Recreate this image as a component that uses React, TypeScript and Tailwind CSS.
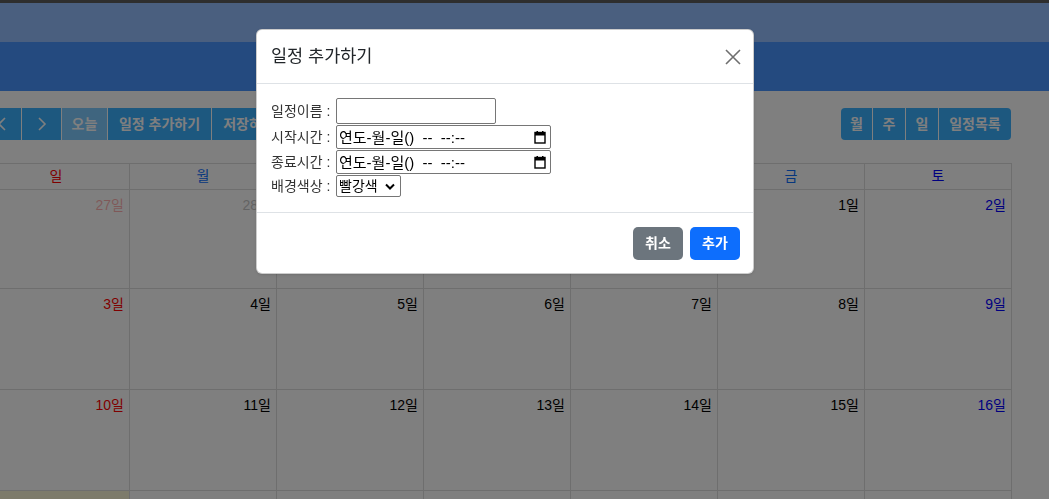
import React from 'react';

const FONT = { fontFamily: '"Liberation Sans", "Noto Sans CJK KR", sans-serif' };

const DAY_NAMES = ['일', '월', '화', '수', '목', '금', '토'];

// 2023년 9월 — 첫 주는 8월 27일부터
const WEEKS = [
  [27, 28, 29, 30, 31, 1, 2],
  [3, 4, 5, 6, 7, 8, 9],
  [10, 11, 12, 13, 14, 15, 16],
  [17, 18, 19, 20, 21, 22, 23],
  [24, 25, 26, 27, 28, 29, 30],
];

const headColor = (i: number) =>
  i === 0 ? 'text-[#ff0000]' : i === 6 ? 'text-[#0000ff]' : 'text-[#0d6efd]';

const dayColor = (i: number) =>
  i === 0 ? 'text-[#ff0000]' : i === 6 ? 'text-[#0000ff]' : 'text-black';

const ChevronLeft = () => (
  <svg width="10" height="16" viewBox="0 0 10 16" fill="none">
    <path d="M8 2L2 8l6 6" stroke="white" strokeWidth="1.6" />
  </svg>
);

const ChevronRight = () => (
  <svg width="10" height="16" viewBox="0 0 10 16" fill="none">
    <path d="M2 2l6 6-6 6" stroke="white" strokeWidth="1.6" />
  </svg>
);

const CalendarIcon = () => (
  <svg width="12" height="13" viewBox="0 0 12 13" fill="none">
    <rect x="1" y="1.5" width="10" height="10.5" stroke="black" strokeWidth="1.4" />
    <rect x="1" y="1.5" width="10" height="3" fill="black" />
    <rect x="2.5" y="0" width="1.5" height="2" fill="black" />
    <rect x="8" y="0" width="1.5" height="2" fill="black" />
  </svg>
);

function DateTimeField() {
  return (
    <div className="flex items-center justify-between w-[215px] h-[24px] border border-[#767676] rounded-[2px] pl-[2px] pr-[4px] bg-white">
      <span className="text-[15px] text-black whitespace-pre leading-none">연도-월-일()  --  --:--</span>
      <CalendarIcon />
    </div>
  );
}

export default function App() {
  return (
    <div className="relative w-full h-screen overflow-hidden bg-white" style={FONT}>
      {/* 상단 바 */}
      <div className="h-[3px] bg-[#5c5c5c]" />
      <div className="h-[39px] bg-[#94befe]" />
      <div className="h-[49px] bg-[#4894fe]" />

      {/* 캘린더 */}
      <div className="-ml-[18px] w-[1030px] pt-[17px]">
        <div className="flex items-center justify-between h-[32px] mb-[23px]">
          <div className="flex gap-px h-full">
            <button className="w-[39px] flex items-center justify-center bg-[#3bb0fe] rounded-l-[4px]">
              <ChevronLeft />
            </button>
            <button className="w-[39px] flex items-center justify-center bg-[#3bb0fe]">
              <ChevronRight />
            </button>
            <button className="w-[45px] bg-[#3bb0fe] opacity-65 text-white text-[14px] font-bold">오늘</button>
            <button className="w-[103px] bg-[#3bb0fe] text-white text-[14px] font-bold">일정 추가하기</button>
            <button className="w-[74px] bg-[#3bb0fe] text-white text-[14px] font-bold rounded-r-[4px]">저장하기</button>
          </div>
          <h2 className="text-[22px] text-black">2023년 9월</h2>
          <div className="flex gap-px h-full mr-px">
            <button className="w-[31px] bg-[#3bb0fe] text-white text-[14px] font-bold rounded-l-[4px]">월</button>
            <button className="w-[32px] bg-[#3bb0fe] text-white text-[14px] font-bold">주</button>
            <button className="w-[32px] bg-[#3bb0fe] text-white text-[14px] font-bold">일</button>
            <button className="w-[72px] bg-[#3bb0fe] text-white text-[14px] font-bold rounded-r-[4px]">일정목록</button>
          </div>
        </div>

        <div className="border-l border-t border-[#dddddd]">
          <div className="grid grid-cols-7">
            {DAY_NAMES.map((d, i) => (
              <div
                key={d}
                className={`h-[26px] flex items-center justify-center border-r border-b border-[#dddddd] text-[14px] ${headColor(i)}`}
              >
                {d}
              </div>
            ))}
          </div>
          {WEEKS.map((week, wi) => (
            <div key={wi} className="grid grid-cols-7">
              {week.map((day, di) => {
                const other = wi === 0 && di < 5;
                const today = wi === 3 && di === 0;
                return (
                  <div
                    key={di}
                    className={`${wi === 0 ? 'h-[99px]' : 'h-[101px]'} border-r border-b border-[#dddddd] flex justify-end items-start px-[5px] pt-[5px] ${
                      today ? 'bg-[#faf6d6]' : ''
                    }`}
                  >
                    <span
                      className={`text-[14px] leading-[20px] ${other && di > 0 ? 'text-[#444]' : dayColor(di)} ${
                        other ? 'opacity-30' : ''
                      }`}
                    >
                      {day}일
                    </span>
                  </div>
                );
              })}
            </div>
          ))}
        </div>
      </div>

      {/* 모달 배경 */}
      <div className="fixed inset-0 bg-black/50" />

      {/* 일정 추가 모달 */}
      <div className="absolute left-[256px] top-[29px] w-[498px] bg-white border border-black/20 rounded-[6px] shadow-sm">
        <div className="flex items-center justify-between h-[54px] border-b border-[#dee2e6] pl-[14px] pr-[12px]">
          <h5 className="text-[17.5px] text-[#212529]">일정 추가하기</h5>
          <button className="w-[16px] h-[16px] flex items-center justify-center">
            <svg width="16" height="16" viewBox="0 0 16 16" fill="none">
              <path d="M1 1l14 14M15 1L1 15" stroke="#6f6f6f" strokeWidth="1.6" />
            </svg>
          </button>
        </div>

        <div className="px-[14px] pt-[14px] pb-[15px] text-[14px] text-[#333]">
          <div className="flex items-center mb-px">
            <span className="w-[65px] shrink-0 whitespace-nowrap">일정이름 :</span>
            <input type="text" className="w-[160px] h-[26px] border border-[#767676] rounded-[2px] px-1 outline-none" />
          </div>
          <div className="flex items-center mb-px">
            <span className="w-[65px] shrink-0 whitespace-nowrap">시작시간 :</span>
            <DateTimeField />
          </div>
          <div className="flex items-center mb-px">
            <span className="w-[65px] shrink-0 whitespace-nowrap">종료시간 :</span>
            <DateTimeField />
          </div>
          <div className="flex items-center">
            <span className="w-[65px] shrink-0 whitespace-nowrap">배경색상 :</span>
            <div className="relative w-[65px] h-[22px]">
              <select className="w-full h-full appearance-none border border-[#767676] rounded-[2px] pl-[2px] text-[14px] text-black bg-white">
                <option>빨강색</option>
                <option>주황색</option>
                <option>노랑색</option>
                <option>초록색</option>
                <option>파랑색</option>
              </select>
              <svg
                className="absolute right-[6px] top-[8px] pointer-events-none"
                width="10"
                height="7"
                viewBox="0 0 10 7"
                fill="none"
              >
                <path d="M1 1.5l4 4 4-4" stroke="black" strokeWidth="2" />
              </svg>
            </div>
          </div>
        </div>

        <div className="flex justify-end gap-[7px] border-t border-[#dee2e6] pt-[14px] pb-[13px] pr-[13px]">
          <button className="w-[50px] h-[33px] rounded-[5px] bg-[#6c757d] text-white text-[14px] font-bold">취소</button>
          <button className="w-[50px] h-[33px] rounded-[5px] bg-[#0d6efd] text-white text-[14px] font-bold">추가</button>
        </div>
      </div>
    </div>
  );
}
